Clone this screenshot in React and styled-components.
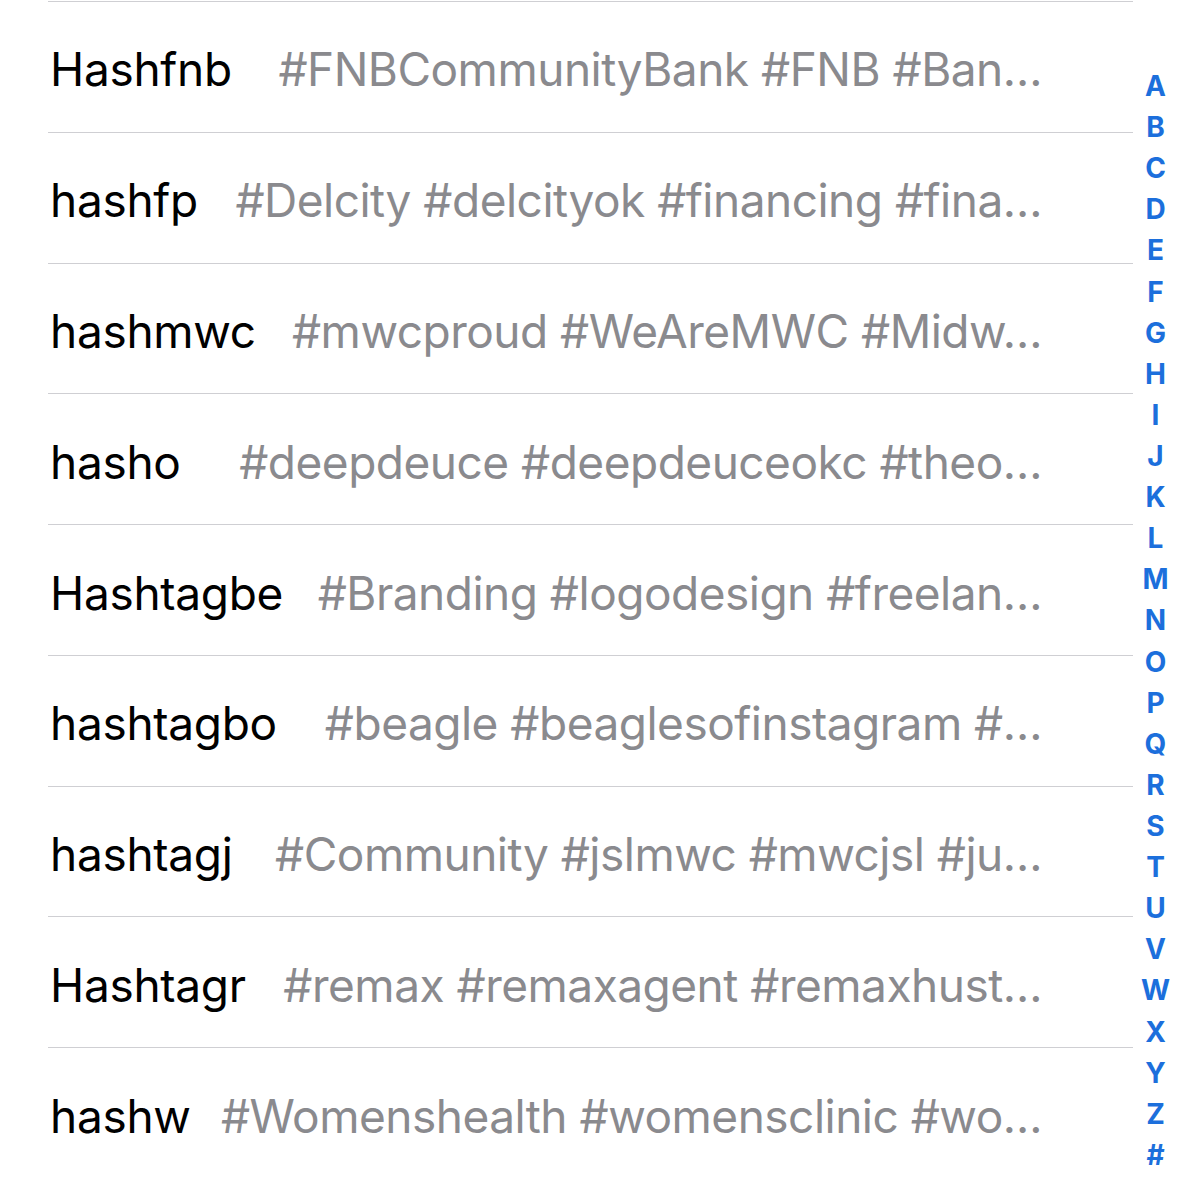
import React from "react";
import styled, { createGlobalStyle } from "styled-components";

const GlobalStyle = createGlobalStyle`
  html, body {
    margin: 0;
    padding: 0;
    background: #ffffff;
  }
  body {
    font-family: Inter, "Liberation Sans", sans-serif;
  }
`;

const Screen = styled.div`
  width: 1178px;
  height: 1178px;
  display: flex;
  overflow: hidden;
  background: #fff;
`;

const List = styled.div`
  flex: 1;
  min-width: 0;
  padding-left: 48px;
  display: flex;
  flex-direction: column;
  padding-top: 1px;
`;

const Row = styled.div`
  box-sizing: border-box;
  height: 131.5px;
  border-top: 1px solid #cfcfd3;
  display: flex;
  align-items: center;
  padding: 5px 91px 0 2px;
`;

const Name = styled.span`
  flex: none;
  font-size: 46px;
  color: #000;
  letter-spacing: -0.3px;
`;

const Tags = styled.span`
  flex: 1;
  min-width: 0;
  margin-left: 16px;
  font-size: 46px;
  color: #8a8a8e;
  text-align: right;
  white-space: nowrap;
  overflow: hidden;
  text-overflow: ellipsis;
  letter-spacing: -0.5px;
`;

const Index = styled.div`
  flex: none;
  width: 45px;
  padding-top: 68px;
  display: flex;
  flex-direction: column;
  align-items: center;
`;

const IndexLetter = styled.span`
  height: 41.2px;
  line-height: 36px;
  font-size: 28px;
  font-weight: 700;
  color: #1c6fdc;
`;

const rows = [
  ["Hashfnb", "#FNBCommunityBank #FNB #Ban…"],
  ["hashfp", "#Delcity #delcityok #financing #fina…"],
  ["hashmwc", "#mwcproud #WeAreMWC #Midw…"],
  ["hasho", "#deepdeuce #deepdeuceokc #theo…"],
  ["Hashtagbe", "#Branding #logodesign #freelan…"],
  ["hashtagbo", "#beagle #beaglesofinstagram #…"],
  ["hashtagj", "#Community #jslmwc #mwcjsl #ju…"],
  ["Hashtagr", "#remax #remaxagent #remaxhust…"],
  ["hashw", "#Womenshealth #womensclinic #wo…"],
];

const letters = "ABCDEFGHIJKLMNOPQRSTUVWXYZ#".split("");

const App = () => {
  return (
    <>
      <GlobalStyle />
      <Screen>
        <List>
          {rows.map(([name, tags]) => (
            <Row key={name}>
              <Name>{name}</Name>
              <Tags>{tags}</Tags>
            </Row>
          ))}
        </List>
        <Index>
          {letters.map((l) => (
            <IndexLetter key={l}>{l}</IndexLetter>
          ))}
        </Index>
      </Screen>
    </>
  );
};

export default App;
